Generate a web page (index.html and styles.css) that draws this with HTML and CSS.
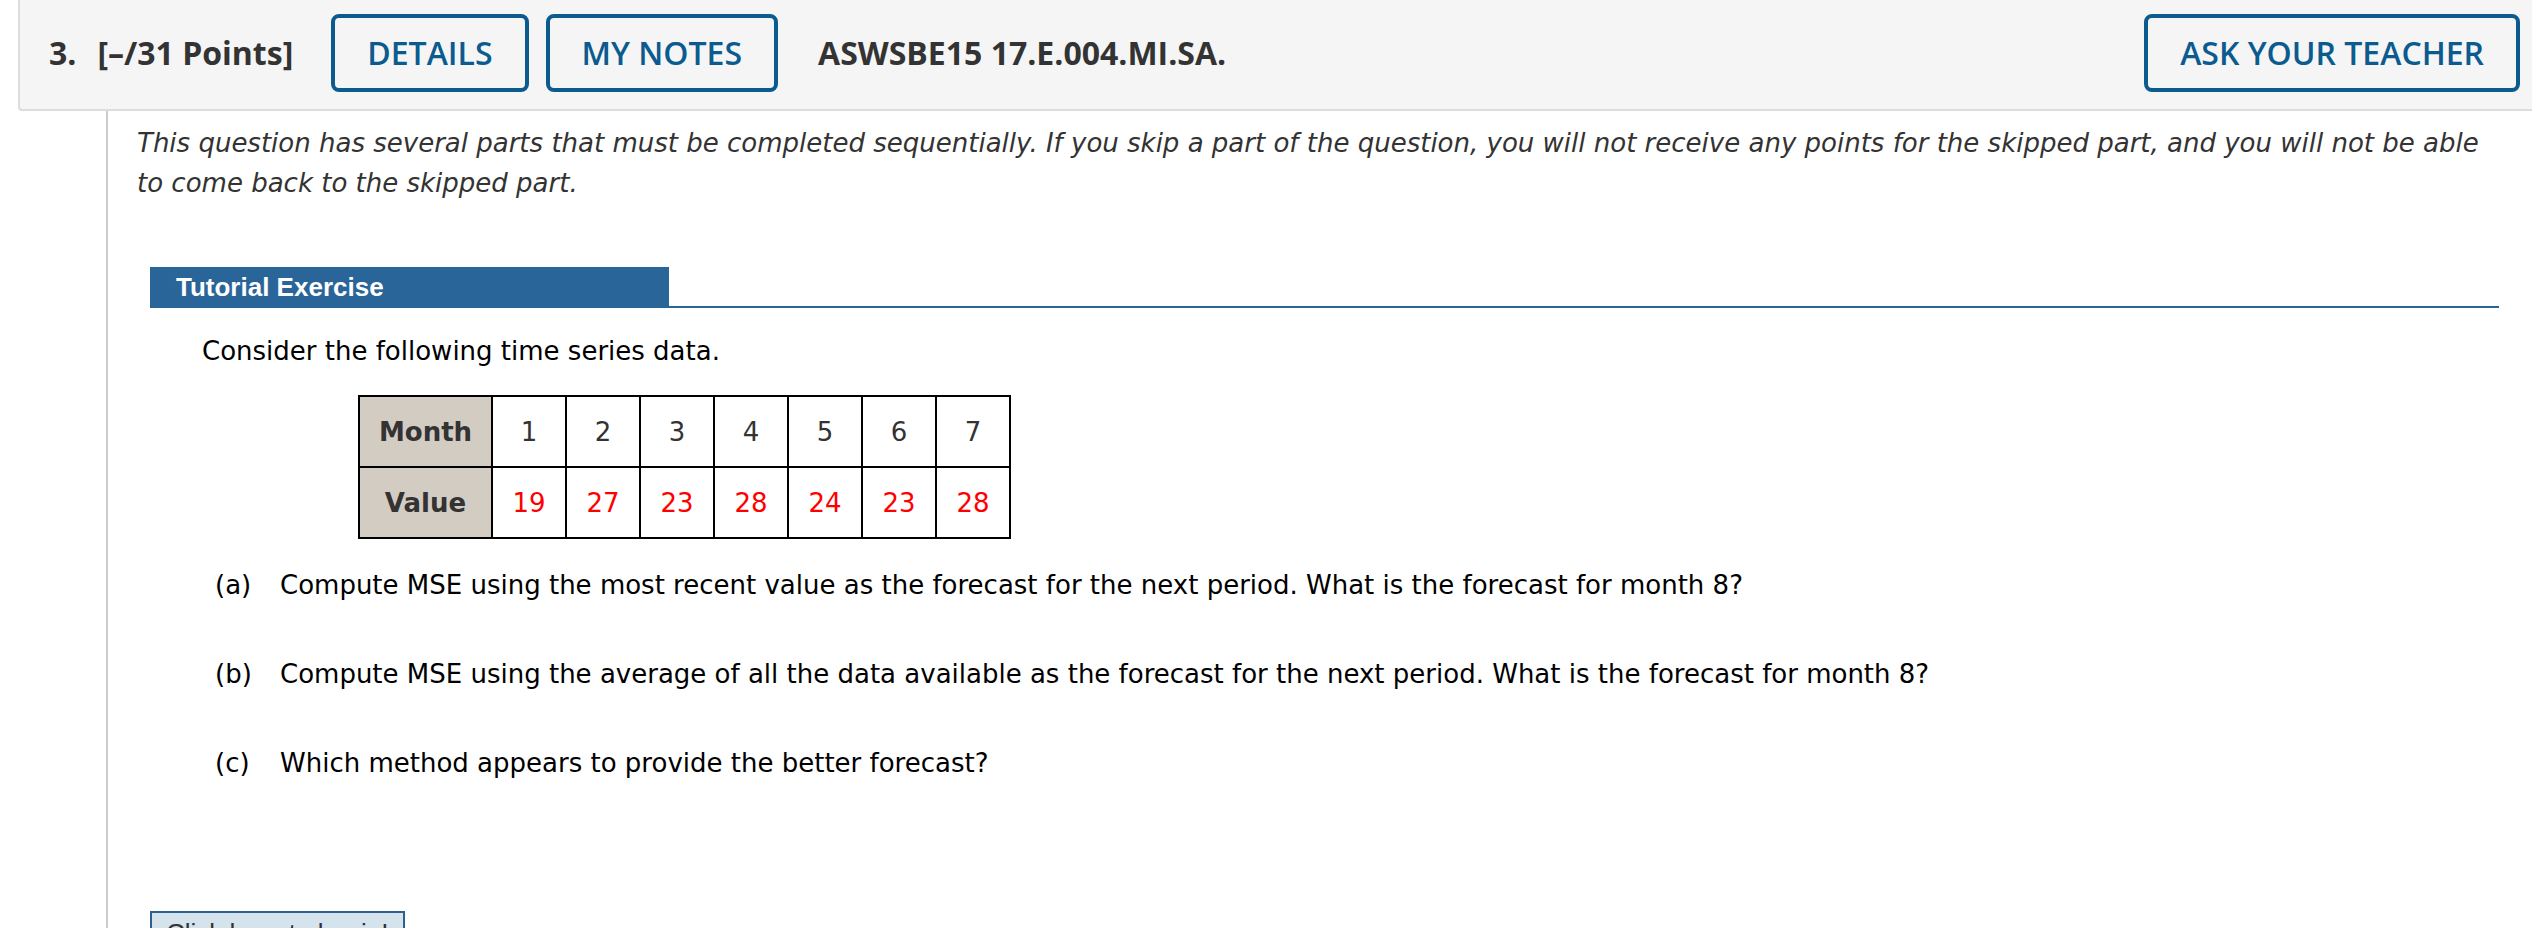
FILE: index.html
```html
<!DOCTYPE html>
<html lang="en">
<head>
<meta charset="utf-8">
<title>Question 3</title>
<link rel="stylesheet" href="styles.css">
</head>
<body>
<div class="qheader">
  <span class="qnum">3.</span>
  <span class="qpoints">[–/31 Points]</span>
  <button class="hbtn btn-details">DETAILS</button>
  <button class="hbtn btn-notes">MY NOTES</button>
  <span class="qcode">ASWSBE15 17.E.004.MI.SA.</span>
  <button class="hbtn btn-ask">ASK YOUR TEACHER</button>
</div>
<div class="qbody">
  <p class="notice">This question has several parts that must be completed sequentially. If you skip a part of the question, you will not receive any points for the skipped part, and you will not be able to come back to the skipped part.</p>
  <div class="tutorial">
    <div class="tut-title">Tutorial Exercise</div>
  </div>
  <p class="intro">Consider the following time series data.</p>
  <table class="data">
    <tr>
      <th>Month</th>
      <td>1</td><td>2</td><td>3</td><td>4</td><td>5</td><td>6</td><td>7</td>
    </tr>
    <tr>
      <th>Value</th>
      <td class="red">19</td><td class="red">27</td><td class="red">23</td><td class="red">28</td><td class="red">24</td><td class="red">23</td><td class="red">28</td>
    </tr>
  </table>
  <div class="parts">
    <div class="part"><span class="plabel">(a)</span><span>Compute MSE using the most recent value as the forecast for the next period. What is the forecast for month 8?</span></div>
    <div class="part"><span class="plabel">(b)</span><span>Compute MSE using the average of all the data available as the forecast for the next period. What is the forecast for month 8?</span></div>
    <div class="part"><span class="plabel">(c)</span><span>Which method appears to provide the better forecast?</span></div>
  </div>
  <button class="begin">Click here to begin!</button>
</div>
</body>
</html>
```

FILE: styles.css
```css
html, body {
  margin: 0;
  padding: 0;
  background: #ffffff;
}
body {
  font-family: "DejaVu Sans", Verdana, sans-serif;
  overflow: hidden;
  height: 928px;
}
.qheader {
  margin-left: 18px;
  height: 109px;
  background: #f5f5f5;
  border-left: 2px solid #dddddd;
  border-bottom: 2px solid #dddddd;
  border-bottom-left-radius: 4px;
  display: flex;
  align-items: center;
  padding: 0 12px 0 29px;
  box-sizing: content-box;
  font-family: "Open Sans", "Noto Sans", sans-serif;
  color: #333333;
}
.qnum {
  font-size: 32px;
  font-weight: 700;
  margin-right: 21px;
  margin-top: -4px;
}
.qpoints {
  font-size: 32px;
  font-weight: 700;
  margin-right: 38px;
  margin-top: -4px;
}
.qcode {
  font-size: 32px;
  font-weight: 700;
  margin-left: 40px;
  margin-top: -4px;
}
.hbtn {
  font-family: "Open Sans", "Noto Sans", sans-serif;
  font-size: 32px;
  font-weight: 600;
  color: #0b5b8f;
  background: transparent;
  border: 4px solid #0b5b8f;
  border-radius: 8px;
  height: 78px;
  padding: 0 32px;
  margin-top: -4px;
  cursor: pointer;
}
.btn-notes {
  margin-left: 17px;
}
.btn-ask {
  margin-left: auto;
}
.qbody {
  margin-left: 106px;
  border-left: 2px solid #cccccc;
  padding: 12px 33px 0 29px;
  min-height: 900px;
}
.notice {
  margin: 0;
  font-style: italic;
  font-size: 26px;
  line-height: 40px;
  color: #333333;
}
.tutorial {
  margin: 64px 0 0 13px;
  border-bottom: 2px solid #2a6599;
  display: flex;
}
.tut-title {
  width: 493px;
  height: 41px;
  margin-bottom: -2px;
  background: #2a6599;
  color: #ffffff;
  font-family: "Liberation Sans", Arial, sans-serif;
  font-weight: 700;
  font-size: 26px;
  line-height: 41px;
  padding-left: 26px;
}
.intro {
  margin: 23px 0 0 65px;
  font-size: 26px;
  line-height: 40px;
  color: #000000;
}
.data {
  border-collapse: collapse;
  margin: 24px 0 0 221px;
  font-size: 26px;
}
.data th, .data td {
  border: 2px solid #000000;
  height: 69px;
  padding: 0;
  text-align: center;
}
.data th {
  width: 131px;
  background: #d3ccc3;
  color: #333333;
  font-weight: 700;
}
.data td {
  width: 72px;
  color: #333333;
}
.data td.red {
  color: #ff0000;
}
.parts {
  display: flex;
  flex-direction: column;
  gap: 49px;
  margin: 26px 0 0 78px;
}
.part {
  display: flex;
  font-size: 26px;
  line-height: 40px;
  color: #000000;
}
.plabel {
  width: 65px;
  flex: none;
}
.begin {
  margin: 128px 0 0 13px;
  display: block;
  font-family: "Liberation Sans", Arial, sans-serif;
  font-size: 26px;
  color: #333333;
  background: #d5e3ed;
  border: 2px solid #2e5f8e;
  height: 44px;
  padding: 0 14px;
}
```
